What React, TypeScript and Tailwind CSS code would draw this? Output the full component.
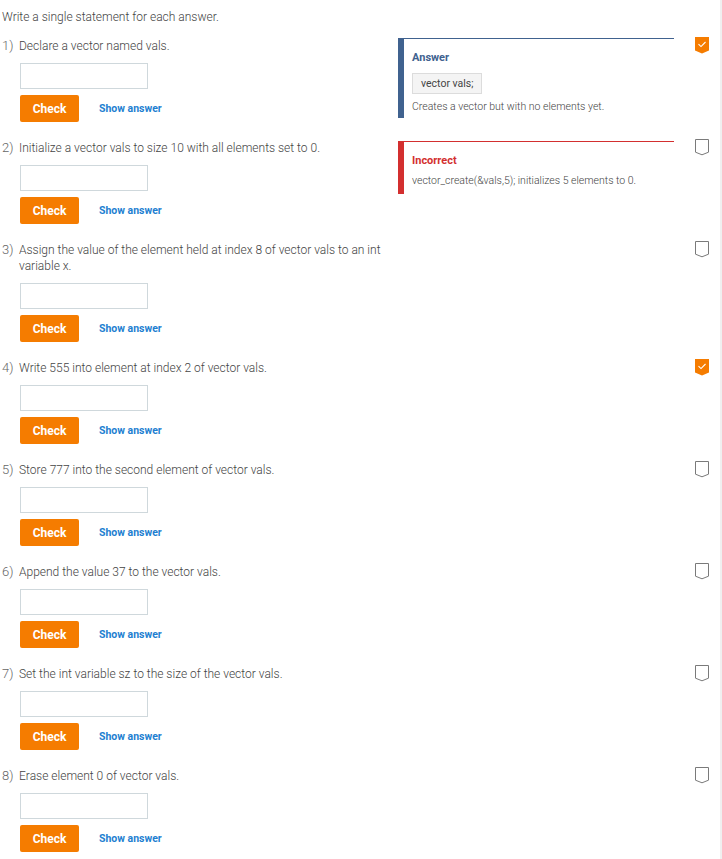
import React from "react";

type Q = {
  n: number;
  text: string;
  checked: boolean;
  panel?: "answer" | "incorrect";
};

const questions: Q[] = [
  { n: 1, text: "Declare a vector named vals.", checked: true, panel: "answer" },
  { n: 2, text: "Initialize a vector vals to size 10 with all elements set to 0.", checked: false, panel: "incorrect" },
  { n: 3, text: "Assign the value of the element held at index 8 of vector vals to an int variable x.", checked: false },
  { n: 4, text: "Write 555 into element at index 2 of vector vals.", checked: true },
  { n: 5, text: "Store 777 into the second element of vector vals.", checked: false },
  { n: 6, text: "Append the value 37 to the vector vals.", checked: false },
  { n: 7, text: "Set the int variable sz to the size of the vector vals.", checked: false },
  { n: 8, text: "Erase element 0 of vector vals.", checked: false },
];

function Chevron({ checked }: { checked: boolean }) {
  return (
    <svg width="14" height="17" viewBox="0 0 14 17" className="block">
      {checked ? (
        <>
          <path d="M0 0 H14 V13.5 L7 16.5 L0 13.5 Z" fill="#f57c00" />
          <path d="M3.5 7.2 L6 9.6 L10.5 5" fill="none" stroke="#ffffff" strokeWidth="1.1" />
        </>
      ) : (
        <path d="M0.5 0.5 H13.5 V13.2 L7 15.8 L0.5 13.2 Z" fill="#ffffff" stroke="#7a7a7a" strokeWidth="1" />
      )}
    </svg>
  );
}

function AnswerPanel() {
  return (
    <div className="border-t border-t-[#40628f] border-l-[6px] border-l-[#40628f] pl-2 pt-[11px] pb-[5px] h-[80px]">
      <div className="text-[11px] leading-4 font-bold text-[#40628f]">Answer</div>
      <div className="mt-[7px] inline-block bg-[#f4f4f4] border border-[#dcdcdc] h-[21px] px-[8px] text-[10.5px] leading-[19px] text-[#444]">
        vector vals;
      </div>
      <div className="mt-[5px] text-[10.5px] font-light leading-4 text-[#444]">Creates a vector but with no elements yet.</div>
    </div>
  );
}

function IncorrectPanel() {
  return (
    <div className="mt-[1px] border-t border-t-[#d32f2f] border-l-[6px] border-l-[#d32f2f] pl-2 pt-[11px] h-[53px]">
      <div className="text-[11px] leading-4 font-bold text-[#d32f2f]">Incorrect</div>
      <div className="mt-[4px] text-[10.5px] font-light leading-4 text-[#444]">vector_create(&amp;vals,5); initializes 5 elements to 0.</div>
    </div>
  );
}

export default function App() {
  return (
    <div
      className="flex w-[722px] min-h-[859px] bg-white text-[#444]"
      style={{ fontFamily: "Roboto, 'Liberation Sans', sans-serif" }}
    >
      <div className="w-[720px] pt-[9px]">
        <div className="pl-[2px] text-[12px] font-light leading-4">Write a single statement for each answer.</div>
        <div className="mt-[13px] flex flex-col gap-[18px]">
          {questions.map((q) => (
            <div key={q.n} className="flex">
              <div className="w-[392px] pl-[2px] flex">
                <div className="w-[17px] shrink-0 text-[13px] font-light leading-4 text-[#666]">{q.n})</div>
                <div className="flex-1 pr-[6px]">
                  <div className="text-[12px] font-light leading-4">{q.text}</div>
                  <input
                    type="text"
                    className="mt-[9px] ml-[1px] block w-[128px] h-[26px] border border-[#cfd8dc] bg-white outline-none"
                  />
                  <div className="mt-[6px] ml-[1px] flex items-center">
                    <button className="w-[59px] h-[27px] rounded-[2px] bg-[#f57c00] text-white text-[12px] font-bold">
                      Check
                    </button>
                    <span className="ml-[20px] text-[10.5px] font-bold text-[#1e7fd1]">Show answer</span>
                  </div>
                </div>
              </div>
              <div className="ml-[6px] w-[276px]">
                {q.panel === "answer" && <AnswerPanel />}
                {q.panel === "incorrect" && <IncorrectPanel />}
              </div>
              <div className="ml-[21px] -mt-[1px]">
                <Chevron checked={q.checked} />
              </div>
            </div>
          ))}
        </div>
      </div>
      <div className="w-[2px] bg-[#f0f0f0]" />
    </div>
  );
}
